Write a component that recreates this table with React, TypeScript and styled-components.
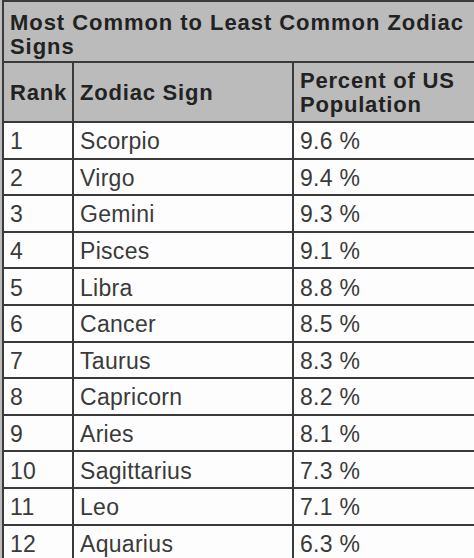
import React from "react";
import styled, { createGlobalStyle } from "styled-components";

const Global = createGlobalStyle`
  html, body {
    margin: 0;
    padding: 0;
    background: #bdbdbd;
    overflow: hidden;
  }
  body {
    width: 474px;
    height: 558px;
  }
`;

const Frame = styled.div`
  width: 474px;
  height: 558px;
  overflow: hidden;
  padding: 0 0 0 2px;
  box-sizing: border-box;
`;

const Table = styled.table`
  border-collapse: collapse;
  table-layout: fixed;
  width: 500px;
  border: 2px solid #3a3a3a;
  font-family: "Liberation Sans", Arial, Helvetica, sans-serif;
`;

const TitleCell = styled.th`
  background: #bbbbbb;
  color: #222;
  font-weight: 700;
  font-size: 22px;
  line-height: 24px;
  letter-spacing: 0.95px;
  text-align: left;
  padding: 8px 6px 2px 6px;
  height: 49px;
  border: 2px solid #3a3a3a;
  vertical-align: middle;
`;

const HeadCell = styled.th`
  background: #bbbbbb;
  color: #222;
  font-weight: 700;
  font-size: 22px;
  line-height: 24px;
  letter-spacing: 0.8px;
  text-align: left;
  padding: 2px 6px 0 6px;
  height: 56px;
  border: 2px solid #3a3a3a;
  vertical-align: middle;
  white-space: nowrap;
`;

const Cell = styled.td`
  background: #fdfdfd;
  color: #3a3a3a;
  font-size: 23px;
  line-height: 26px;
  letter-spacing: 0.3px;
  padding: 2px 6px 0 6px;
  height: 32.6px;
  border: 2px solid #3a3a3a;
  vertical-align: middle;
  white-space: nowrap;
`;

const rows: [string, string][] = [
  ["Scorpio", "9.6 %"],
  ["Virgo", "9.4 %"],
  ["Gemini", "9.3 %"],
  ["Pisces", "9.1 %"],
  ["Libra", "8.8 %"],
  ["Cancer", "8.5 %"],
  ["Taurus", "8.3 %"],
  ["Capricorn", "8.2 %"],
  ["Aries", "8.1 %"],
  ["Sagittarius", "7.3 %"],
  ["Leo", "7.1 %"],
  ["Aquarius", "6.3 %"],
];

export default function App() {
  return (
    <>
      <Global />
      <Frame>
        <Table>
          <colgroup>
            <col style={{ width: 70 }} />
            <col style={{ width: 220 }} />
            <col />
          </colgroup>
          <thead>
            <tr>
              <TitleCell colSpan={3}>
                Most Common to Least Common Zodiac Signs
              </TitleCell>
            </tr>
            <tr>
              <HeadCell>Rank</HeadCell>
              <HeadCell>Zodiac Sign</HeadCell>
              <HeadCell>
                Percent of US
                <br />
                Population
              </HeadCell>
            </tr>
          </thead>
          <tbody>
            {rows.map(([sign, pct], i) => (
              <tr key={sign}>
                <Cell>{i + 1}</Cell>
                <Cell>{sign}</Cell>
                <Cell>{pct}</Cell>
              </tr>
            ))}
          </tbody>
        </Table>
      </Frame>
    </>
  );
}
